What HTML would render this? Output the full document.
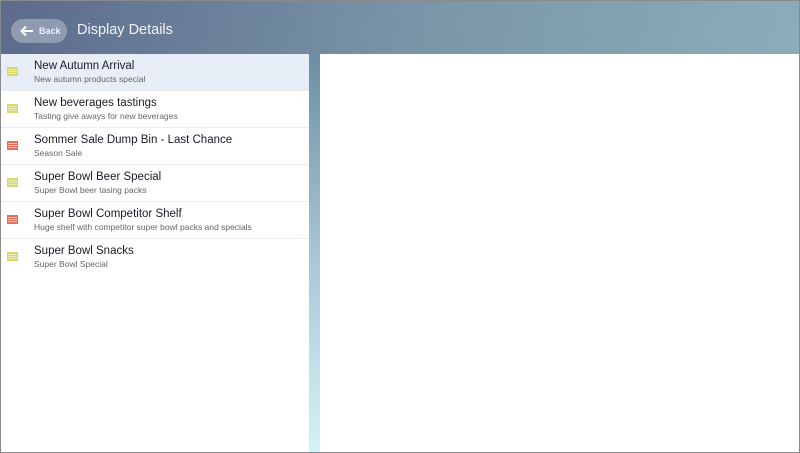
<!DOCTYPE html>
<html><head><style>
body{margin:0;width:800px;height:453px;overflow:hidden;font-family:"Liberation Sans",sans-serif;}
.wrap{position:absolute;inset:0;border:1px solid #8a8a8a;box-sizing:border-box;
background:linear-gradient(100deg,#5c6b8c 0%,#7a97a8 50%,#8eb1bd 100%);}
.side{position:absolute;left:308px;top:53px;width:11px;bottom:0;background:linear-gradient(180deg,#6a8ea3,#a6c6d4 50%,#d3f3fb);}
.back{position:absolute;left:10px;top:18px;width:56px;height:24px;border-radius:12px;background:#8f9bb0;color:#eef;font-size:9px;font-weight:bold;line-height:24px;}
.back span{position:absolute;left:28px}
.title{position:absolute;left:76px;top:21px;color:#f2f4f8;font-size:14.5px;}
.left{position:absolute;left:0;top:53px;width:308px;bottom:0;background:#fff;}
.right{position:absolute;left:319px;top:53px;right:0;bottom:0;background:#fff;}
.row{height:36px;border-bottom:1px solid #ececec;position:relative;}
.row.sel{background:#e8eef8;}
.row .t{position:absolute;left:33px;top:6px;font-size:11.5px;color:#1a1a2a;}
.row .s{position:absolute;left:33px;top:20px;font-size:8.5px;color:#666;}
.ic{position:absolute;left:6px;top:13px;width:11px;height:9px;}
</style></head><body><div class="wrap">
<div class="back"><svg width="14" height="12" style="position:absolute;left:9px;top:6px" viewBox="0 0 14 12"><path d="M13 6H2M6 1.5L1.5 6 6 10.5" stroke="#fff" stroke-width="2" fill="none"/></svg><span>Back</span></div>
<div class="title">Display Details</div>
<div class="side"></div>
<div class="left">
<div class="row sel"><svg class="ic"><rect width="11" height="9" fill="#d6d870"/><path d="M1 2.5h9M1 4.5h9M1 6.5h9" stroke="#f4f4c8" stroke-width=".8"/></svg><div class="t">New Autumn Arrival</div><div class="s">New autumn products special</div></div>
<div class="row"><svg class="ic"><rect width="11" height="9" fill="#d6d870"/><path d="M1 2.5h9M1 4.5h9M1 6.5h9" stroke="#f4f4c8" stroke-width=".8"/></svg><div class="t">New beverages tastings</div><div class="s">Tasting give aways for new beverages</div></div>
<div class="row"><svg class="ic"><rect width="11" height="9" fill="#e2705a"/><path d="M1 2.5h9M1 4.5h9M1 6.5h9" stroke="#fbd8cf" stroke-width=".8"/></svg><div class="t">Sommer Sale Dump Bin - Last Chance</div><div class="s">Season Sale</div></div>
<div class="row"><svg class="ic"><rect width="11" height="9" fill="#d6d870"/><path d="M1 2.5h9M1 4.5h9M1 6.5h9" stroke="#f4f4c8" stroke-width=".8"/></svg><div class="t">Super Bowl Beer Special</div><div class="s">Super Bowl beer tasing packs</div></div>
<div class="row"><svg class="ic"><rect width="11" height="9" fill="#e2705a"/><path d="M1 2.5h9M1 4.5h9M1 6.5h9" stroke="#fbd8cf" stroke-width=".8"/></svg><div class="t">Super Bowl Competitor Shelf</div><div class="s">Huge shelf with competitor super bowl packs and specials</div></div>
<div class="row" style="border:none"><svg class="ic"><rect width="11" height="9" fill="#d6d870"/><path d="M1 2.5h9M1 4.5h9M1 6.5h9" stroke="#f4f4c8" stroke-width=".8"/></svg><div class="t">Super Bowl Snacks</div><div class="s">Super Bowl Special</div></div>
</div>
<div class="right"></div>
</div></body></html>
